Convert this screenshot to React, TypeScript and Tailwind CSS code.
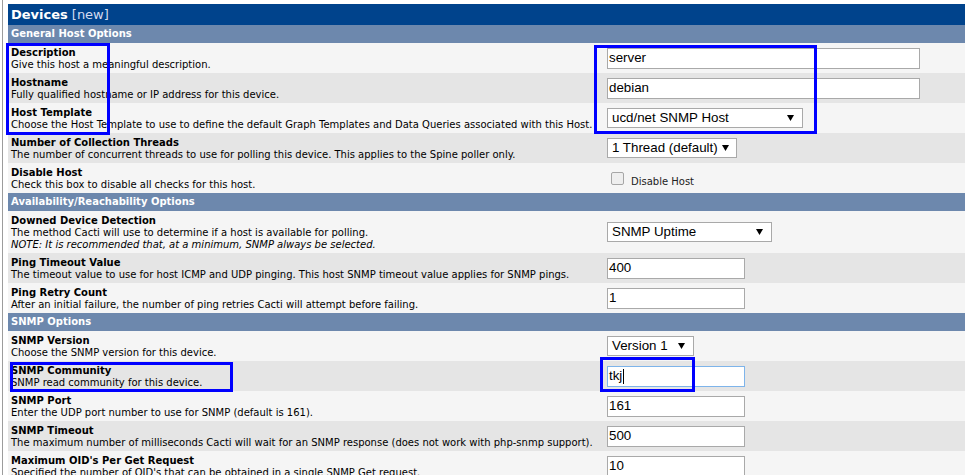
import React from "react";

const LIGHT = "bg-[#f5f5f5]";
const DARK = "bg-[#e5e5e5]";

function TextInput({ value, w, focus, cursor }: { value: string; w: string; focus?: boolean; cursor?: boolean }) {
  return (
    <div
      className={`${w} h-[21px] flex items-center px-[1px] bg-white border ${
        focus ? "border-[#7eb4ea]" : "border-[#a9a9a9]"
      } font-['Liberation_Sans',Arial,sans-serif] text-[13.33px] text-black leading-none`}
    >
      <span>{value}</span>
      {cursor && <span className="inline-block w-px h-[15px] bg-black ml-[1px]" />}
    </div>
  );
}

function Select({ value, w }: { value: string; w: string }) {
  return (
    <div
      className={`${w} h-[20px] flex items-center justify-between pl-[4px] pr-[8px] bg-white border border-[#a9a9a9] font-['Liberation_Sans',Arial,sans-serif] text-[13.33px] text-black leading-none`}
    >
      <span className="whitespace-nowrap">{value}</span>
      <svg width="7" height="6" viewBox="0 0 7 6" className="shrink-0 ml-[4px]">
        <polygon points="0,0 7,0 3.5,6" fill="#000" />
      </svg>
    </div>
  );
}

function Section({ title }: { title: string }) {
  return (
    <div className="h-[18px] bg-[#6d88ad] flex items-center pl-[3px] text-[10px] font-bold text-white leading-none">
      {title}
    </div>
  );
}

function Row({
  bg,
  title,
  desc,
  note,
  h = "h-[30px]",
  children,
}: {
  bg: string;
  title: string;
  desc: string;
  note?: string;
  h?: string;
  children: React.ReactNode;
}) {
  return (
    <div className={`grid grid-cols-[596px_1fr] ${h} ${bg}`}>
      <div className="pt-[4px] pl-[3px] text-[10px] leading-[12px] text-black whitespace-nowrap">
        <div className="font-bold">{title}</div>
        <div>{desc}</div>
        {note && <div className="italic">{note}</div>}
      </div>
      <div className="flex items-center pl-[3px]">{children}</div>
    </div>
  );
}

export default function App() {
  return (
    <div className="relative w-[965px] h-[475px] overflow-hidden bg-white font-['DejaVu_Sans',Verdana,sans-serif]">
      <div className="ml-[2px] h-full border-l border-[#9c9c9c] pl-[5px] pt-[4px]">
        <div className="w-[1000px]">
          <div className="h-[21px] bg-[#00438c] flex items-center pl-[3px] text-[13px] leading-none">
            <span className="font-bold text-white">Devices</span>
            <span className="ml-[4px] text-[#d4dcf0]">[new]</span>
          </div>
          <Section title="General Host Options" />
          <Row bg={LIGHT} title="Description" desc="Give this host a meaningful description.">
            <TextInput value="server" w="w-[313px]" />
          </Row>
          <Row bg={DARK} title="Hostname" desc="Fully qualified hostname or IP address for this device.">
            <TextInput value="debian" w="w-[313px]" />
          </Row>
          <Row
            bg={LIGHT}
            title="Host Template"
            desc="Choose the Host Template to use to define the default Graph Templates and Data Queries associated with this Host."
          >
            <Select value="ucd/net SNMP Host" w="w-[196px]" />
          </Row>
          <Row
            bg={DARK}
            title="Number of Collection Threads"
            desc="The number of concurrent threads to use for polling this device. This applies to the Spine poller only."
          >
            <Select value="1 Thread (default)" w="w-[130px]" />
          </Row>
          <Row bg={LIGHT} title="Disable Host" desc="Check this box to disable all checks for this host.">
            <div className="flex items-start ml-[4px] mt-[2px]">
              <div className="w-[13px] h-[13px] rounded-[2px] border border-[#a6a6a6] bg-[#eeeeee]" />
              <span className="ml-[7px] pt-[5px] text-[10px] text-[#222] leading-none">Disable Host</span>
            </div>
          </Row>
          <Section title="Availability/Reachability Options" />
          <Row
            bg={LIGHT}
            h="h-[42px]"
            title="Downed Device Detection"
            desc="The method Cacti will use to determine if a host is available for polling."
            note="NOTE: It is recommended that, at a minimum, SNMP always be selected."
          >
            <Select value="SNMP Uptime" w="w-[165px]" />
          </Row>
          <Row
            bg={DARK}
            title="Ping Timeout Value"
            desc="The timeout value to use for host ICMP and UDP pinging. This host SNMP timeout value applies for SNMP pings."
          >
            <TextInput value="400" w="w-[138px]" />
          </Row>
          <Row
            bg={LIGHT}
            title="Ping Retry Count"
            desc="After an initial failure, the number of ping retries Cacti will attempt before failing."
          >
            <TextInput value="1" w="w-[138px]" />
          </Row>
          <Section title="SNMP Options" />
          <Row bg={LIGHT} title="SNMP Version" desc="Choose the SNMP version for this device.">
            <Select value="Version 1" w="w-[87px]" />
          </Row>
          <Row bg={DARK} title="SNMP Community" desc="SNMP read community for this device.">
            <TextInput value="tkj" w="w-[138px]" focus cursor />
          </Row>
          <Row bg={LIGHT} title="SNMP Port" desc="Enter the UDP port number to use for SNMP (default is 161).">
            <TextInput value="161" w="w-[138px]" />
          </Row>
          <Row
            bg={DARK}
            title="SNMP Timeout"
            desc="The maximum number of milliseconds Cacti will wait for an SNMP response (does not work with php-snmp support)."
          >
            <TextInput value="500" w="w-[138px]" />
          </Row>
          <Row
            bg={LIGHT}
            title="Maximum OID's Per Get Request"
            desc="Specified the number of OID's that can be obtained in a single SNMP Get request."
          >
            <TextInput value="10" w="w-[138px]" />
          </Row>
        </div>
      </div>

      {/* annotation boxes */}
      <div className="absolute left-[6px] top-[43px] w-[104px] h-[92px] border-[3px] border-[#0000ff]" />
      <div className="absolute left-[594px] top-[45px] w-[223px] h-[89px] border-[3px] border-[#0000ff]" />
      <div className="absolute left-[10px] top-[362px] w-[223px] h-[30px] border-[3px] border-[#0000ff]" />
      <div className="absolute left-[600px] top-[357px] w-[95px] h-[35px] border-[3px] border-[#0000ff]" />
    </div>
  );
}
